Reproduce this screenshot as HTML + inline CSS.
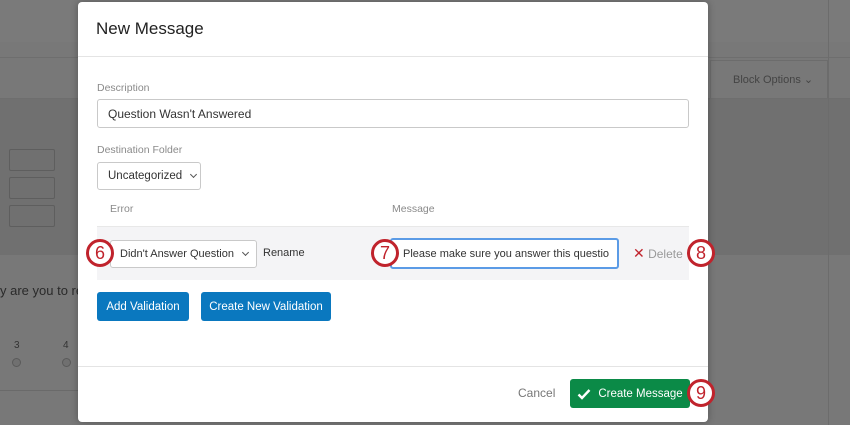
<!DOCTYPE html>
<html><head><style>
*{box-sizing:border-box;margin:0;padding:0}
body{width:850px;height:425px;overflow:hidden;background:#787878;font-family:"Liberation Sans",sans-serif;position:relative}
.a{position:absolute;white-space:nowrap}
.m{left:78px;top:2px;width:630px;height:420px;background:#fff;border-radius:4px;box-shadow:0 0 8px rgba(0,0,0,.3)}
.lbl{font-size:10.5px;color:#8a8a8a}
.inp{border:1px solid #c9c9c9;border-radius:3px;background:#fff;font-size:12px;color:#333;padding-left:10px;display:flex;align-items:center;overflow:hidden}
.btn{background:#0a78bf;color:#fff;font-size:11.5px;border-radius:3px;display:flex;align-items:center;justify-content:center}
.c{width:28px;height:28px;border:3px solid #c0232c;border-radius:50%;background:#fff;color:#c0232c;font-size:18px;display:flex;align-items:center;justify-content:center}
.chev{display:inline-block;width:5px;height:5px;border-right:1px solid #555;border-bottom:1px solid #555;transform:rotate(45deg);margin-left:9px;margin-top:-3px;flex:none}
</style></head><body>
<div class="a" style="left:0;top:0;width:850px;height:42px;background:#7a7a7a"></div>
<div class="a" style="left:0;top:57px;width:850px;height:42px;border-top:1px solid #6e6e6e;border-bottom:1px solid #6e6e6e"></div>
<div class="a" style="left:710px;top:60px;width:118px;height:38px;border:1px solid #6c6c6c;border-bottom:none"></div>
<div class="a" style="left:733px;top:73px;font-size:11px;color:#444">Block Options ⌄</div>
<div class="a" style="left:0;top:99px;width:850px;height:156px;background:#707070"></div>
<div class="a" style="left:9px;top:149px;width:46px;height:22px;border:1px solid #5e5e5e;border-radius:2px"></div>
<div class="a" style="left:9px;top:177px;width:46px;height:22px;border:1px solid #5e5e5e;border-radius:2px"></div>
<div class="a" style="left:9px;top:205px;width:46px;height:22px;border:1px solid #5e5e5e;border-radius:2px"></div>
<div class="a" style="left:0;top:283px;font-size:13px;color:#2a2a2a">y are you to re</div>
<div class="a" style="left:14px;top:340px;font-size:10px;color:#333">3</div>
<div class="a" style="left:63px;top:340px;font-size:10px;color:#333">4</div>
<div class="a" style="left:12px;top:358px;width:9px;height:9px;border-radius:50%;border:1px solid #5a5a5a;background:#707070"></div>
<div class="a" style="left:62px;top:358px;width:9px;height:9px;border-radius:50%;border:1px solid #5a5a5a;background:#707070"></div>
<div class="a" style="left:0;top:390px;width:78px;border-top:1px solid #6a6a6a"></div>
<div class="a" style="left:828px;top:0;height:425px;border-left:1px solid #6c6c6c"></div>

<div class="a m"></div>
<div class="a" style="left:96px;top:19px;font-size:17px;color:#222">New Message</div>
<div class="a" style="left:78px;top:56px;width:630px;border-top:1px solid #e4e4e4"></div>
<div class="a lbl" style="left:97px;top:82px">Description</div>
<div class="a inp" style="left:97px;top:99px;width:592px;height:29px">Question Wasn't Answered</div>
<div class="a lbl" style="left:97px;top:144px">Destination Folder</div>
<div class="a inp" style="left:97px;top:162px;width:104px;height:28px;font-size:11.5px">Uncategorized<span class="chev"></span></div>
<div class="a lbl" style="left:110px;top:203px">Error</div>
<div class="a lbl" style="left:392px;top:203px">Message</div>
<div class="a" style="left:97px;top:226px;width:592px;height:54px;background:#f4f4f6;border-top:1px solid #e8e8e8"></div>
<div class="a inp" style="left:110px;top:240px;width:147px;height:28px;font-size:11px;padding-left:9px">Didn't Answer Question<span class="chev"></span></div>
<div class="a" style="left:263px;top:247px;font-size:11px;color:#333">Rename</div>
<div class="a inp" style="left:390px;top:238px;width:229px;height:31px;border:2px solid #5b9be6;padding-left:11px;font-size:11px">Please make sure you answer this questio</div>
<div class="a" style="left:633px;top:245px;font-size:12px;color:#999"><span style="color:#c0232c;font-size:14px">✕</span> Delete</div>
<div class="a btn" style="left:97px;top:292px;width:92px;height:29px">Add Validation</div>
<div class="a btn" style="left:201px;top:292px;width:130px;height:29px">Create New Validation</div>
<div class="a" style="left:78px;top:366px;width:630px;border-top:1px solid #e4e4e4"></div>
<div class="a" style="left:518px;top:386px;font-size:12px;color:#777">Cancel</div>
<div class="a btn" style="left:570px;top:379px;width:120px;height:29px;background:#0b8a47;font-size:11.5px"><svg width="14" height="12" viewBox="0 0 14 12" style="margin-right:7px"><path d="M1.5 6.5 L5 10 L12.5 2" stroke="#fff" stroke-width="2.4" fill="none"/></svg>Create Message</div>
<div class="a c" style="left:86px;top:239px">6</div>
<div class="a c" style="left:371px;top:239px">7</div>
<div class="a c" style="left:687px;top:239px">8</div>
<div class="a c" style="left:687px;top:379px">9</div>
</body></html>
